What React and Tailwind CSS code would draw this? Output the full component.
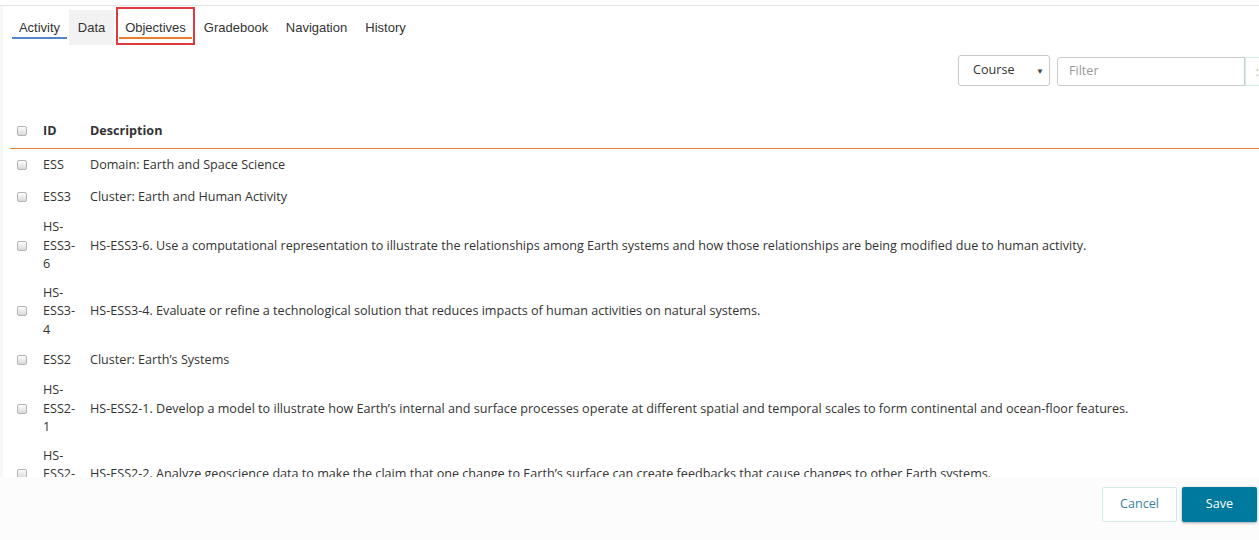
import React from "react";

const rows = [
  { id: ["ESS"], d: "Domain: Earth and Space Science" },
  { id: ["ESS3"], d: "Cluster: Earth and Human Activity" },
  {
    id: ["HS-", "ESS3-", "6"],
    d: "HS-ESS3-6. Use a computational representation to illustrate the relationships among Earth systems and how those relationships are being modified due to human activity.",
  },
  {
    id: ["HS-", "ESS3-", "4"],
    d: "HS-ESS3-4. Evaluate or refine a technological solution that reduces impacts of human activities on natural systems.",
  },
  { id: ["ESS2"], d: "Cluster: Earth\u2019s Systems" },
  {
    id: ["HS-", "ESS2-", "1"],
    d: "HS-ESS2-1. Develop a model to illustrate how Earth\u2019s internal and surface processes operate at different spatial and temporal scales to form continental and ocean-floor features.",
  },
  {
    id: ["HS-", "ESS2-", "2"],
    d: "HS-ESS2-2. Analyze geoscience data to make the claim that one change to Earth\u2019s surface can create feedbacks that cause changes to other Earth systems.",
  },
];

function Check() {
  return (
    <span className="block w-[10px] h-[10px] rounded-[2px] border border-[#b4b4b4] bg-gradient-to-b from-[#fdfdfd] to-[#d9d9d9]" />
  );
}

export default function App() {
  const open = { fontFamily: '"Open Sans", "Liberation Sans", sans-serif' };
  const arial = { fontFamily: '"Liberation Sans", Arial, sans-serif' };
  return (
    <div className="w-[1259px] h-[540px] bg-white overflow-hidden flex flex-col text-[#333]" style={open}>
      <div className="h-[6px] shrink-0 border-b border-[#e3e3e3]" />
      <div className="flex h-[471px] shrink-0 overflow-hidden">
        <div className="w-[3px] shrink-0 bg-[#f7f7f7]" />
        <div className="flex-1 flex flex-col min-w-0 overflow-hidden">
          {/* tabs */}
          <div className="shrink-0 flex items-stretch gap-[2px] pl-[9px] pt-[4px] h-[39px] text-[13px] text-[#333]" style={arial}>
            <div className="relative w-[55px] flex items-center justify-center">
              Activity
              <span className="absolute left-0 right-0 bottom-[6px] h-[2px] bg-[#4f86c6]" />
            </div>
            <div className="w-[45px] flex items-center justify-center bg-[#f2f2f2]">Data</div>
            <div className="relative w-[79px] flex items-center justify-center">
              Objectives
              <span className="absolute left-[3px] right-[3px] bottom-[6px] h-[2px] bg-[#ee7d2b]" />
              <span className="absolute left-0 right-0 top-[-3px] bottom-[0px] border-2 border-[#e0393e]" />
            </div>
            <div className="w-[78px] flex items-center justify-center">Gradebook</div>
            <div className="w-[79px] flex items-center justify-center">Navigation</div>
            <div className="w-[55px] flex items-center justify-center">History</div>
          </div>
          {/* toolbar */}
          <div className="shrink-0 flex justify-end items-start mt-[10px] h-[31px] text-[12.6px]">
            <div className="w-[92px] h-[31px] border border-[#c8c8c8] rounded-[3px] flex items-center justify-between pl-[14px] pr-[5px]">
              <span>Course</span>
              <span className="text-[8px] text-[#444]">▼</span>
            </div>
            <div className="ml-[7px] mt-[2px] w-[188px] h-[29px] border border-[#cccccc] rounded-l-[3px] flex items-center pl-[11px] text-[#9a9a9a]">
              Filter
            </div>
            <div className="mt-[2px] w-[14px] h-[29px] border-t border-b border-l border-[#d3ebe7] flex items-center justify-end text-[#d9a27a] text-[12px]">
              :
            </div>
          </div>
          {/* table */}
          <div className="shrink-0 ml-[7px] mt-[28px]">
            <div className="flex items-center h-[35px] border-b border-[#e5823a] text-[12.6px] font-bold">
              <div className="w-[33px] pl-[7px]">
                <Check />
              </div>
              <div className="w-[47px]">ID</div>
              <div>Description</div>
            </div>
            {rows.map((r, i) => (
              <div key={i} className="flex items-center min-h-[32px] py-[5px] text-[12.6px] leading-[18.5px]">
                <div className="w-[33px] pl-[7px] shrink-0">
                  <Check />
                </div>
                <div className="w-[47px] shrink-0">
                  {r.id.map((l, j) => (
                    <div key={j}>{l}</div>
                  ))}
                </div>
                <div className="whitespace-nowrap">{r.d}</div>
              </div>
            ))}
          </div>
        </div>
      </div>
      {/* footer */}
      <div className="flex-1 bg-[#fcfcfc] flex justify-end items-start gap-[5px] pt-[10px] pr-[2px] text-[12.6px]">
        <button className="w-[75px] h-[35px] bg-white border border-[#d2e9e6] rounded-[2px] text-[#3a7fa3]">Cancel</button>
        <button className="w-[75px] h-[35px] bg-[#00799e] rounded-[2px] text-white shadow-[0_1px_3px_rgba(0,0,0,0.35)]">Save</button>
      </div>
    </div>
  );
}
